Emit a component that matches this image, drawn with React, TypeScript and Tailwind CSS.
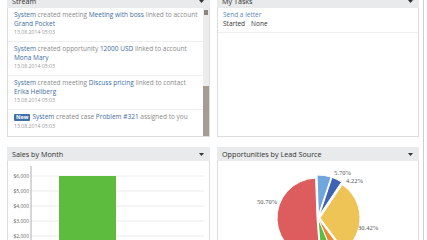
import React from "react";

const font = { fontFamily: '"Open Sans", "Liberation Sans", sans-serif' };

function Caret() {
  return (
    <svg width="5" height="3" viewBox="0 0 5 3" className="shrink-0">
      <path d="M0 0 H5 L2.5 3 Z" fill="#333" />
    </svg>
  );
}

function PanelHeader({ title }: { title: string }) {
  return (
    <div className="flex h-[14px] items-center justify-between bg-[#e8eaeb] pl-[5px] pr-[6px] text-[7.2px] text-[#333]">
      <span>{title}</span>
      <Caret />
    </div>
  );
}

type StreamItem = {
  parts: { t: string; link?: boolean }[];
  date: string;
  badge?: boolean;
};

const stream: StreamItem[] = [
  {
    parts: [
      { t: "System", link: true },
      { t: " created meeting " },
      { t: "Meeting with boss", link: true },
      { t: " linked to account " },
      { t: "Grand Pocket", link: true },
    ],
    date: "13.08.2014 05:03",
  },
  {
    parts: [
      { t: "System", link: true },
      { t: " created opportunity " },
      { t: "12000 USD", link: true },
      { t: " linked to account " },
      { t: "Mona Mary", link: true },
    ],
    date: "13.08.2014 05:03",
  },
  {
    parts: [
      { t: "System", link: true },
      { t: " created meeting " },
      { t: "Discuss pricing", link: true },
      { t: " linked to contact " },
      { t: "Erika Hellberg", link: true },
    ],
    date: "13.08.2014 05:03",
  },
  {
    parts: [
      { t: "System", link: true },
      { t: " created case " },
      { t: "Problem #321", link: true },
      { t: " assigned to you" },
    ],
    date: "13.08.2014 05:03",
    badge: true,
  },
];

function StreamPanel() {
  return (
    <div className="flex flex-col">
      <PanelHeader title="Stream" />
      <div className="flex h-[129px] border border-t-0 border-[#dcdcdc] bg-white">
        <div className="flex-1 overflow-hidden">
          {stream.map((item, i) => (
            <div key={i} className="h-[34px] border-b border-[#eeeeee] pl-[6px] pr-[4px] pt-[3px]">
              <div className="text-[6.5px] leading-[8.5px] text-[#8a8a8a]">
                {item.badge && (
                  <span className="mr-[2px] inline-block rounded-[1px] bg-[#3e6fa6] px-[2px] text-[5.5px] font-bold leading-[7px] text-white">
                    New
                  </span>
                )}
                {item.parts.map((p, j) =>
                  p.link ? (
                    <span key={j} className="text-[#3d6d9f]">{p.t}</span>
                  ) : (
                    <span key={j}>{p.t}</span>
                  )
                )}
              </div>
              <div className="text-[5.2px] leading-[8px] text-[#9a9a9a]">{item.date}</div>
            </div>
          ))}
        </div>
        {/* scrollbar */}
        <div className="flex w-[6px] flex-col bg-[#ececec]">
          <div className="mx-auto mt-[2px] h-[5px] w-[4px] bg-[#8c8580]" />
          <div className="flex-1" />
          <div className="h-[50px] w-full bg-[#a49b92]" />
        </div>
      </div>
    </div>
  );
}

function TasksPanel() {
  return (
    <div className="flex flex-col">
      <PanelHeader title="My Tasks" />
      <div className="h-[129px] border border-t-0 border-[#dcdcdc] bg-white">
        <div className="h-[25px] border-b border-[#eeeeee] pl-[5px] pt-[3px]">
          <div className="text-[6.5px] leading-[8.5px] text-[#5a88bd]">Send a letter</div>
          <div className="flex gap-[6px] text-[6.5px] leading-[8.5px] text-[#333]">
            <span>Started</span>
            <span>None</span>
          </div>
        </div>
      </div>
    </div>
  );
}

function SalesPanel() {
  const ticks = ["$6,000", "$5,000", "$4,000", "$3,000", "$2,000", "$1,000"];
  return (
    <div className="flex flex-col">
      <PanelHeader title="Sales by Month" />
      <div className="h-[100px] border border-t-0 border-[#dcdcdc] bg-white">
        <svg width="201" height="100" viewBox="0 0 201 100">
          {ticks.map((t, i) => {
            const y = 15 + i * 15;
            return (
              <g key={t}>
                <line x1="23" x2="196" y1={y} y2={y} stroke="#e6e6e6" strokeWidth="0.8" />
                <text
                  x="21"
                  y={y + 1.8}
                  textAnchor="end"
                  fontSize="5"
                  fill="#666"
                  fontFamily='"Open Sans", sans-serif'
                >
                  {t}
                </text>
              </g>
            );
          })}
          <line x1="23" x2="23" y1="5" y2="100" stroke="#999" strokeWidth="0.8" />
          <rect x="51" y="15" width="57" height="90" fill="#5dbb3d" />
        </svg>
      </div>
    </div>
  );
}

function slicePath(cx: number, cy: number, r: number, a0: number, a1: number) {
  const rad = (a: number) => ((a - 90) * Math.PI) / 180;
  const x0 = cx + r * Math.cos(rad(a0));
  const y0 = cy + r * Math.sin(rad(a0));
  const x1 = cx + r * Math.cos(rad(a1));
  const y1 = cy + r * Math.sin(rad(a1));
  const large = a1 - a0 > 180 ? 1 : 0;
  return `M${cx} ${cy} L${x0} ${y0} A${r} ${r} 0 ${large} 1 ${x1} ${y1} Z`;
}

function LeadPanel() {
  const slices = [
    { v: 5.7, c: "#6fa6dc", off: 3 },
    { v: 4.22, c: "#3d63b2", off: 3 },
    { v: 30.42, c: "#eec457", off: 2 },
    { v: 4.0, c: "#ee8a35", off: 0 },
    { v: 4.96, c: "#5bbd3c", off: 0 },
    { v: 50.7, c: "#dd5d5e", off: 1 },
  ];
  const cx = 100;
  const cy = 57;
  const r = 40;
  let acc = -2;
  return (
    <div className="flex flex-col">
      <PanelHeader title="Opportunities by Lead Source" />
      <div className="h-[100px] border border-t-0 border-[#dcdcdc] bg-white">
        <svg width="200" height="100" viewBox="0 0 200 100">
          {slices.map((s, i) => {
            const a0 = acc;
            const a1 = acc + (s.v / 100) * 360;
            acc = a1;
            const mid = (((a0 + a1) / 2 - 90) * Math.PI) / 180;
            const dx = s.off * Math.cos(mid);
            const dy = s.off * Math.sin(mid);
            return (
              <path
                key={i}
                d={slicePath(cx + dx, cy + dy, r, a0, a1)}
                fill={s.c}
                stroke="#fff"
                strokeWidth="1"
              />
            );
          })}
          <g fontSize="6.5" fill="#555" fontFamily='"Liberation Serif", serif'>
            <text x="116" y="14">5.70%</text>
            <text x="128" y="22">4.22%</text>
            <text x="39" y="43">50.70%</text>
            <text x="140" y="69">30.42%</text>
          </g>
        </svg>
      </div>
    </div>
  );
}

export default function App() {
  return (
    <div className="relative h-[240px] w-[427px] overflow-hidden bg-white" style={font}>
      <div className="mt-[-6px] grid grid-cols-[203px_202px] gap-x-[7px] gap-y-[10px] pl-[7px]">
        <StreamPanel />
        <TasksPanel />
        <SalesPanel />
        <LeadPanel />
      </div>
      <div className="absolute right-[3px] top-0 h-full w-[1px] bg-[#cfcfcf]" />
    </div>
  );
}
